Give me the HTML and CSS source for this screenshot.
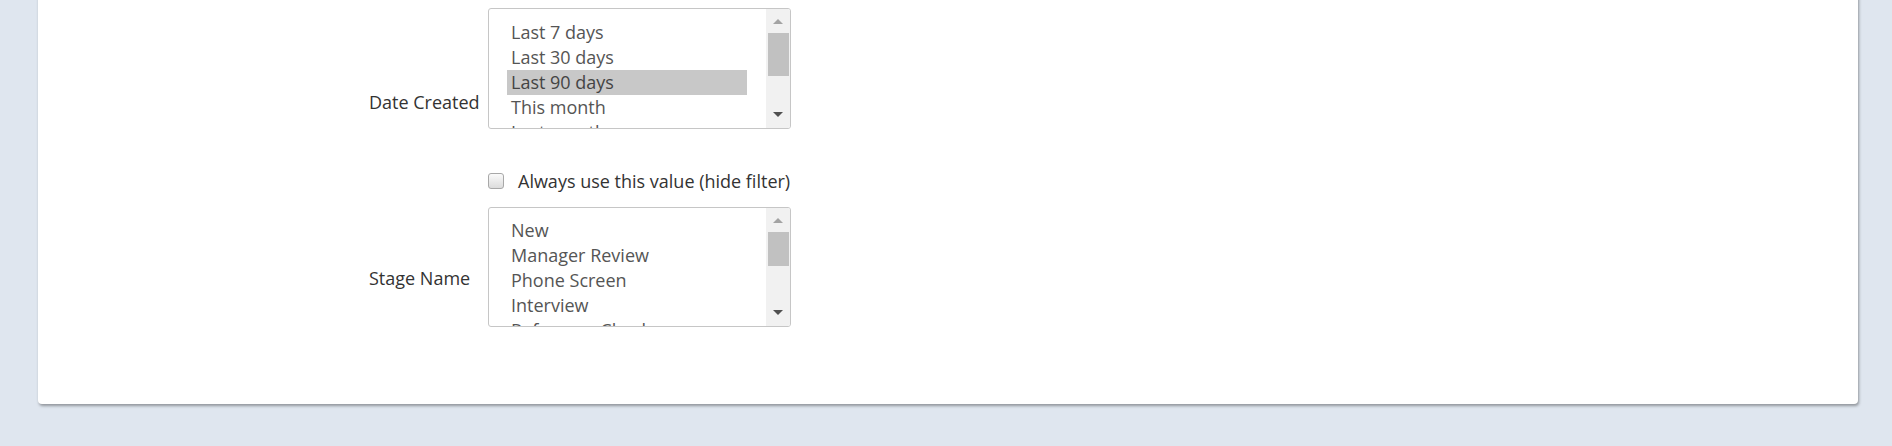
FILE: index.html
```html
<!DOCTYPE html>
<html>
<head>
<meta charset="utf-8">
<link rel="stylesheet" href="styles.css">
</head>
<body>
<div class="card">
  <div class="row">
    <div class="label label-date">Date Created</div>
    <div class="control">
      <div class="listbox">
        <div class="options">
          <div class="option">Last 7 days</div>
          <div class="option">Last 30 days</div>
          <div class="option selected">Last 90 days</div>
          <div class="option">This month</div>
          <div class="option">Last month</div>
        </div>
        <div class="scrollbar">
          <div class="arrow-up"></div>
          <div class="track"><div class="thumb thumb-date"></div></div>
          <div class="arrow-down"></div>
        </div>
      </div>
      <label class="check-row">
        <span class="checkbox"></span>
        <span class="check-text">Always use this value (hide filter)</span>
      </label>
    </div>
  </div>
  <div class="row">
    <div class="label label-stage">Stage Name</div>
    <div class="control">
      <div class="listbox listbox-stage">
        <div class="options">
          <div class="option">New</div>
          <div class="option">Manager Review</div>
          <div class="option">Phone Screen</div>
          <div class="option">Interview</div>
          <div class="option">Reference Check</div>
        </div>
        <div class="scrollbar">
          <div class="arrow-up"></div>
          <div class="track"><div class="thumb thumb-stage"></div></div>
          <div class="arrow-down"></div>
        </div>
      </div>
    </div>
  </div>
</div>
</body>
</html>
```

FILE: styles.css
```css
html, body {
  margin: 0;
  padding: 0;
}
body {
  background: #dfe6ef;
  font-family: "Open Sans", "Liberation Sans", sans-serif;
  font-size: 18px;
  color: #333;
  height: 446px;
  overflow: hidden;
}
.card {
  margin: -20px 0 0 38px;
  width: 1820px;
  box-sizing: border-box;
  background: #fff;
  border-radius: 4px;
  box-shadow: 1px 2px 3px rgba(0, 0, 0, 0.35);
  padding: 28px 0 77px 331px;
}
.row {
  display: flex;
  align-items: flex-start;
}
.label {
  width: 119px;
  line-height: 25px;
  color: #333;
}
.label-date { padding-top: 82px; }
.label-stage { padding-top: 67px; }
.control {
  display: flex;
  flex-direction: column;
}
.listbox {
  display: flex;
  width: 303px;
  height: 121px;
  box-sizing: border-box;
  border: 1px solid #c6c6c6;
  border-radius: 3px;
  overflow: hidden;
  background: #fff;
}
.listbox-stage {
  margin-top: 8px;
  height: 120px;
}
.options {
  flex: 1;
  padding: 11px 19px 0 18px;
  overflow: hidden;
}
.listbox-stage .options { padding-top: 10px; }
.option {
  height: 25px;
  line-height: 25px;
  padding-left: 4px;
  color: #555;
  white-space: nowrap;
}
.option.selected {
  background: #c8c8c8;
  color: #444;
}
.scrollbar {
  width: 24px;
  background: #f1f1f1;
  display: flex;
  flex-direction: column;
  align-items: center;
}
.arrow-up {
  margin-top: 10px;
  width: 0;
  height: 0;
  border-left: 5px solid transparent;
  border-right: 5px solid transparent;
  border-bottom: 5px solid #a3a3a3;
}
.track {
  flex: 1;
  width: 100%;
  padding-top: 9px;
  box-sizing: border-box;
}
.thumb {
  margin-left: 2px;
  width: 21px;
  background: #c1c1c1;
}
.thumb-date { height: 43px; }
.thumb-stage { height: 34px; }
.arrow-down {
  margin-bottom: 11px;
  width: 0;
  height: 0;
  border-left: 5px solid transparent;
  border-right: 5px solid transparent;
  border-top: 5px solid #505050;
}
.check-row {
  display: flex;
  align-items: center;
  margin-top: 40px;
  height: 24px;
  margin-bottom: 6px;
}
.checkbox {
  width: 16px;
  height: 16px;
  box-sizing: border-box;
  border: 1px solid #a8a8a8;
  border-radius: 3px;
  background: linear-gradient(#fafafa, #dcdcdc);
  margin-right: 14px;
}
.check-text {
  color: #333;
  line-height: 24px;
}
```
